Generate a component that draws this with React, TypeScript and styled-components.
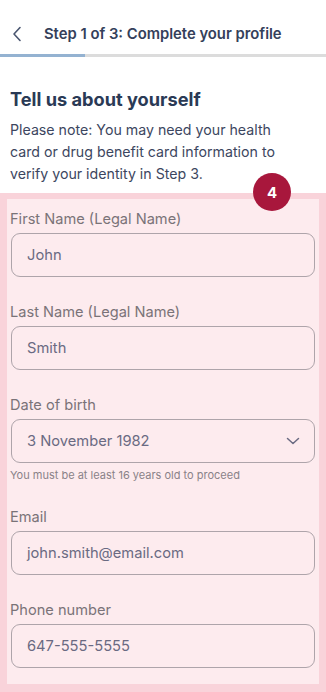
import React from 'react';
import styled, { createGlobalStyle } from 'styled-components';

const GlobalStyle = createGlobalStyle`
  html, body {
    margin: 0;
    padding: 0;
    background: #ffffff;
    font-family: Inter, "Open Sans", Roboto, sans-serif;
  }
  * { box-sizing: border-box; }
`;

const Page = styled.div`
  width: 326px;
  height: 692px;
  overflow: hidden;
  display: flex;
  flex-direction: column;
`;

const Header = styled.div`
  height: 40px;
  margin-top: 14px;
  display: flex;
  align-items: center;
  padding-left: 12px;
  gap: 18px;
  color: #34405a;
  font-size: 14.8px;
  font-weight: 600;
  white-space: nowrap;
`;

const BackButton = styled.span`
  display: flex;
  align-items: center;
  width: 14px;
`;

const Progress = styled.div`
  height: 3px;
  background: #dcdcdc;
  display: flex;
`;

const ProgressFill = styled.div<{ $pct: number }>`
  width: ${(p) => p.$pct}%;
  background: #94b2d1;
`;

const Intro = styled.div`
  padding: 30px 22px 8px 10px;
`;

const Title = styled.h1`
  margin: 0 0 8px 0;
  font-size: 18.2px;
  line-height: 24px;
  font-weight: 700;
  color: #2a3a55;
`;

const Note = styled.p`
  margin: 0;
  font-size: 14.2px;
  line-height: 22px;
  color: #3c4660;
`;

const Highlight = styled.div`
  position: relative;
  flex: 1;
  background: #f9d3da;
  padding: 6px 7px 0 7px;
`;

const Badge = styled.div`
  position: absolute;
  left: 253px;
  top: -20px;
  width: 38px;
  height: 38px;
  border-radius: 50%;
  background: #a8173c;
  color: #fff;
  font-weight: 700;
  font-size: 15px;
  display: flex;
  align-items: center;
  justify-content: center;
`;

const Panel = styled.div`
  background: #fdebee;
  padding: 11px 4px 16px 3px;
  display: flex;
  flex-direction: column;
  gap: 26px;
`;

const Field = styled.div`
  display: flex;
  flex-direction: column;
`;

const Label = styled.label`
  font-size: 14.6px;
  line-height: 18px;
  color: #7a7378;
  margin-bottom: 5px;
  white-space: nowrap;
`;

const InputBox = styled.div`
  height: 44px;
  border: 1.5px solid #aea4aa;
  border-radius: 9px;
  margin-left: 1px;
  padding: 0 14px 0 15px;
  display: flex;
  align-items: center;
  justify-content: space-between;
  font-size: 14.7px;
  color: #6a6a82;
`;

const Hint = styled.div`
  margin-top: 5px;
  font-size: 11px;
  line-height: 14px;
  color: #8a8288;
  white-space: nowrap;
`;

const fields = [
  { label: 'First Name (Legal Name)', value: 'John' },
  { label: 'Last Name (Legal Name)', value: 'Smith' },
  { label: 'Date of birth', value: '3 November 1982', select: true, hint: 'You must be at least 16 years old to proceed' },
  { label: 'Email', value: 'john.smith@email.com' },
  { label: 'Phone number', value: '647-555-5555' },
];

function App() {
  return (
    <Page>
      <GlobalStyle />
      <Header>
        <BackButton>
          <svg width="10" height="16" viewBox="0 0 10 16" fill="none">
            <path d="M8 1.5L2 8l6 6.5" stroke="#4a5670" strokeWidth="1.6" strokeLinecap="round" strokeLinejoin="round" />
          </svg>
        </BackButton>
        Step 1 of 3: Complete your profile
      </Header>
      <Progress>
        <ProgressFill $pct={26} />
      </Progress>
      <Intro>
        <Title>Tell us about yourself</Title>
        <Note>
          Please note: You may need your health card or drug benefit card information to verify your identity in Step 3.
        </Note>
      </Intro>
      <Highlight>
        <Badge>4</Badge>
        <Panel>
          {fields.map((f) => (
            <Field key={f.label}>
              <Label>{f.label}</Label>
              <InputBox>
                <span>{f.value}</span>
                {f.select && (
                  <svg width="14" height="8" viewBox="0 0 14 8" fill="none">
                    <path d="M1.5 1.5L7 6.5l5.5-5" stroke="#6a6a82" strokeWidth="1.5" strokeLinecap="round" strokeLinejoin="round" />
                  </svg>
                )}
              </InputBox>
              {f.hint && <Hint>{f.hint}</Hint>}
            </Field>
          ))}
        </Panel>
      </Highlight>
    </Page>
  );
}

export default App;
